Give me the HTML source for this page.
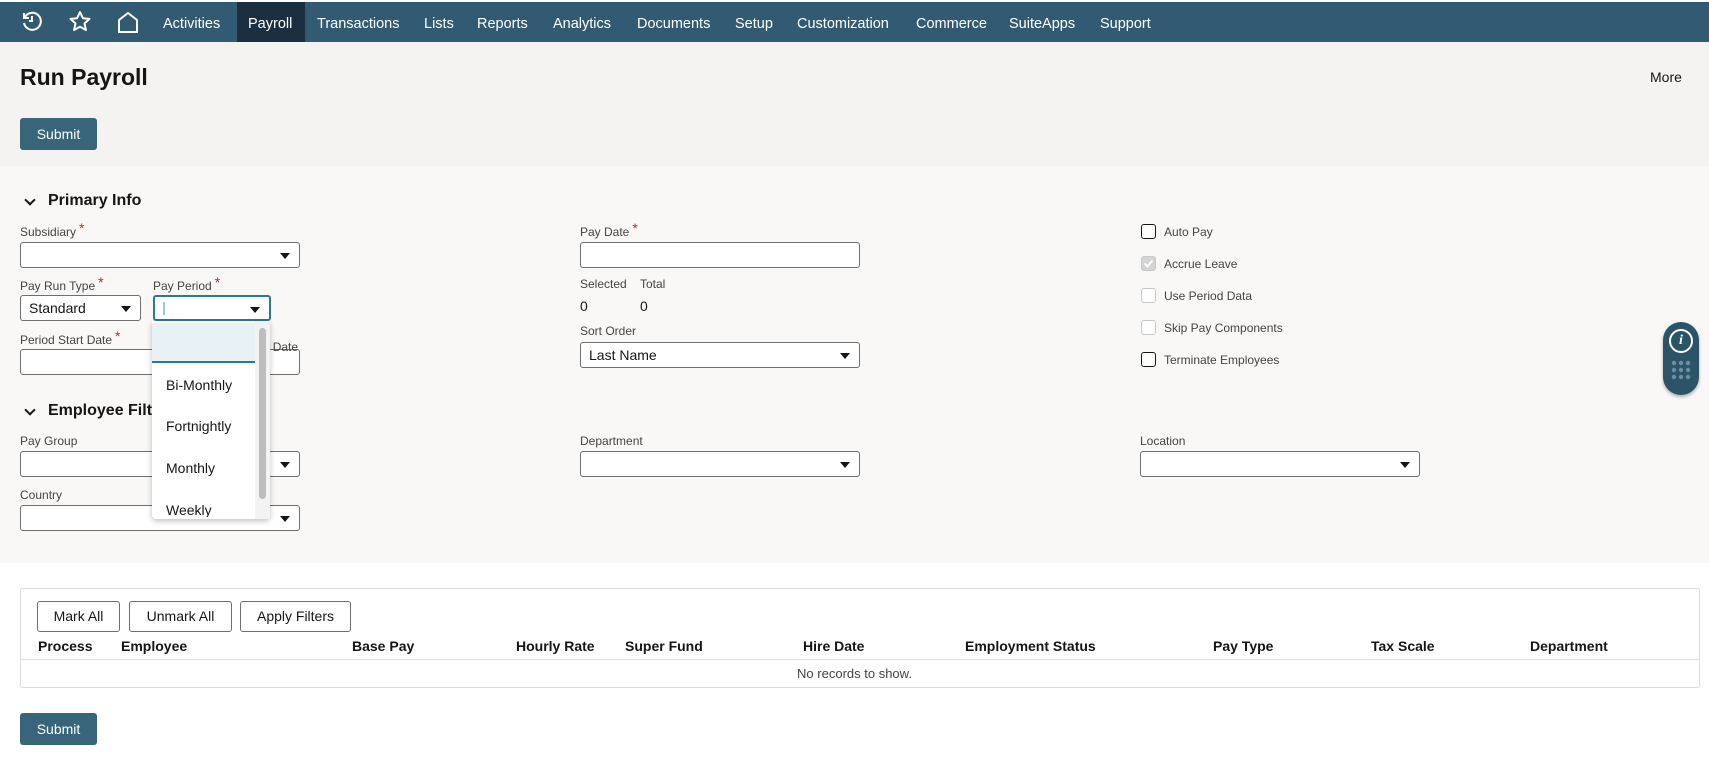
<!DOCTYPE html>
<html><head><meta charset="utf-8"><style>
*{box-sizing:border-box;margin:0;padding:0}
body{width:1709px;height:758px;overflow:hidden;font-family:"Liberation Sans",sans-serif;background:#fff;position:relative;color:#161513}
.a{position:absolute;white-space:nowrap}
.nav{left:0;top:2px;width:1709px;height:40px;background:#325b73}
.ni{top:4px;height:40px;line-height:40px;color:#fff;font-size:14.5px}
.lbl{font-size:12px;color:#444}
.req{color:#c0262d;font-size:14px;position:relative;top:-3px;margin-left:3px}
.sel{border:1px solid #6f6f6f;border-radius:3px;background:#fff;height:26px}
.sel:after{content:"";position:absolute;right:9px;top:10px;border-left:5px solid transparent;border-right:5px solid transparent;border-top:6px solid #161513}
.nosel:after{display:none}
.btn{background:#386579;color:#fff;border-radius:3px;font-size:14px;text-align:center;line-height:32px;height:32px;width:77px}
.wb{border:1px solid #6f6f6f;border-radius:3px;background:#fff;font-size:14px;height:31px;line-height:29px;text-align:center;color:#161513}
.cb{width:15px;height:15px;border:1.5px solid #161513;border-radius:3px;background:#fff}
.cb.d{border-color:#c8c8c8;border-width:1px}
.ct{font-size:12px;color:#444}
.th{top:638px;font-size:14px;font-weight:bold;color:#161513}
.sec{font-size:16px;font-weight:bold}
.chev{width:8px;height:8px;border-right:2px solid #161513;border-bottom:2px solid #161513;transform:rotate(45deg)}
.opt{font-size:14px;color:#161513;left:166px}
</style></head><body>
<div class="a nav"></div>
<svg class="a" style="left:20px;top:9px" width="24" height="24" viewBox="0 0 24 24" fill="none" stroke="#fff" stroke-width="2"><path d="M5 8A8.5 8.5 0 1 1 4 14"/><path d="M4 4v5h5"/><path d="M12 7v5h-3"/></svg>
<svg class="a" style="left:68px;top:10px" width="24" height="22" viewBox="0 0 24 22" fill="none" stroke="#fff" stroke-width="2" stroke-linejoin="round"><path d="M12 2l2.9 6.2 6.6.7-5 4.5 1.4 6.6L12 16.7 6.1 20l1.4-6.6-5-4.5 6.6-.7z"/></svg>
<svg class="a" style="left:117px;top:11px" width="22" height="22" viewBox="0 0 22 22" fill="none" stroke="#fff" stroke-width="2"><path d="M2 21V9L11 2l9 7v12z"/></svg>
<div class="a" style="left:237px;top:2px;width:68px;height:40px;background:#1c2f40"></div>
<div class="a ni" style="left:163px">Activities</div>
<div class="a ni" style="left:248px">Payroll</div>
<div class="a ni" style="left:317px">Transactions</div>
<div class="a ni" style="left:424px">Lists</div>
<div class="a ni" style="left:477px">Reports</div>
<div class="a ni" style="left:553px">Analytics</div>
<div class="a ni" style="left:637px">Documents</div>
<div class="a ni" style="left:735px">Setup</div>
<div class="a ni" style="left:797px">Customization</div>
<div class="a ni" style="left:916px">Commerce</div>
<div class="a ni" style="left:1009px">SuiteApps</div>
<div class="a ni" style="left:1100px">Support</div>

<div class="a" style="left:0;top:42px;width:1709px;height:124px;background:#f4f3f1"></div>
<div class="a" style="left:0;top:166px;width:1709px;height:397px;background:#f9f8f6"></div>
<div class="a" style="left:20px;top:64px;font-size:23px;font-weight:bold">Run Payroll</div>
<div class="a" style="left:1650px;top:69px;font-size:14px">More</div>
<div class="a btn" style="left:20px;top:118px">Submit</div>

<div class="a chev" style="left:26px;top:196px"></div>
<div class="a sec" style="left:48px;top:192px">Primary Info</div>
<div class="a lbl" style="left:20px;top:223px">Subsidiary<span class="req">*</span></div>
<div class="a sel" style="left:20px;top:242px;width:280px"></div>
<div class="a lbl" style="left:20px;top:277px">Pay Run Type<span class="req">*</span></div>
<div class="a sel" style="left:20px;top:295px;width:121px"><span style="position:absolute;left:8px;top:4px;font-size:14px">Standard</span></div>
<div class="a lbl" style="left:153px;top:277px">Pay Period<span class="req">*</span></div>
<div class="a sel" style="left:153px;top:295px;width:118px;border:2px solid #2a7a96"><span style="position:absolute;left:8px;top:5px;width:2px;height:13px;background:#9cc8e6"></span></div>
<div class="a lbl" style="left:20px;top:331px">Period Start Date<span class="req">*</span></div>
<div class="a sel nosel" style="left:20px;top:349px;width:280px"></div>
<div class="a lbl" style="left:210px;top:340px">Period End Date</div>

<div class="a lbl" style="left:580px;top:223px">Pay Date<span class="req">*</span></div>
<div class="a sel nosel" style="left:580px;top:242px;width:280px"></div>
<div class="a lbl" style="left:580px;top:277px">Selected</div>
<div class="a lbl" style="left:640px;top:277px">Total</div>
<div class="a" style="left:580px;top:298px;font-size:14px">0</div>
<div class="a" style="left:640px;top:298px;font-size:14px">0</div>
<div class="a lbl" style="left:580px;top:324px">Sort Order</div>
<div class="a sel" style="left:580px;top:342px;width:280px"><span style="position:absolute;left:8px;top:4px;font-size:14px">Last Name</span></div>

<div class="a cb" style="left:1141px;top:224px"></div><div class="a ct" style="left:1164px;top:225px">Auto Pay</div>
<div class="a cb d" style="left:1141px;top:256px;background:#d4d4d4"><svg width="13" height="13" viewBox="0 0 13 13" style="position:absolute;left:0;top:0"><path d="M2.5 6.5l3 3 5-6" stroke="#fff" stroke-width="1.8" fill="none"/></svg></div><div class="a ct" style="left:1164px;top:257px">Accrue Leave</div>
<div class="a cb d" style="left:1141px;top:288px"></div><div class="a ct" style="left:1164px;top:289px">Use Period Data</div>
<div class="a cb d" style="left:1141px;top:320px"></div><div class="a ct" style="left:1164px;top:321px">Skip Pay Components</div>
<div class="a cb" style="left:1141px;top:352px"></div><div class="a ct" style="left:1164px;top:353px">Terminate Employees</div>

<div class="a" style="left:1663px;top:322px;width:36px;height:73px;border-radius:18px;background:#2c5468;box-shadow:0 2px 3px rgba(0,0,0,.3)"></div>
<div class="a" style="left:1669px;top:329px;width:24px;height:24px;border:2px solid #fff;border-radius:50%;color:#fff;font:italic bold 14px 'Liberation Serif',serif;text-align:center;line-height:20px">i</div>
<svg class="a" style="left:1671px;top:360px" width="20" height="22"><g fill="#6f8ea0"><circle cx="3" cy="3" r="2.2"/><circle cx="10" cy="3" r="2.2"/><circle cx="17" cy="3" r="2.2"/><circle cx="3" cy="10" r="2.2"/><circle cx="10" cy="10" r="2.2"/><circle cx="17" cy="10" r="2.2"/><circle cx="3" cy="17" r="2.2"/><circle cx="10" cy="17" r="2.2"/><circle cx="17" cy="17" r="2.2"/></g></svg>

<div class="a chev" style="left:26px;top:406px"></div>
<div class="a sec" style="left:48px;top:402px">Employee Filters</div>
<div class="a lbl" style="left:20px;top:434px">Pay Group</div>
<div class="a sel" style="left:20px;top:451px;width:280px"></div>
<div class="a lbl" style="left:20px;top:488px">Country</div>
<div class="a sel" style="left:20px;top:505px;width:280px"></div>
<div class="a lbl" style="left:580px;top:434px">Department</div>
<div class="a sel" style="left:580px;top:451px;width:280px"></div>
<div class="a lbl" style="left:1140px;top:434px">Location</div>
<div class="a sel" style="left:1140px;top:451px;width:280px"></div>

<div class="a" style="left:152px;top:321px;width:118px;height:198px;background:#fff;border-radius:0 0 4px 4px;box-shadow:0 2px 6px rgba(0,0,0,.25)">
<div style="position:absolute;left:0;top:2px;width:103px;height:40px;background:#e8f1f3;border-bottom:2px solid #2a7a96"></div>
<div style="position:absolute;left:103px;top:0;width:15px;height:198px;background:#f3f3f3"></div>
<div style="position:absolute;left:107px;top:7px;width:7px;height:171px;background:#bdbdbd;border-radius:4px"></div>
</div>
<div class="a opt" style="top:377px">Bi-Monthly</div>
<div class="a opt" style="top:418px">Fortnightly</div>
<div class="a opt" style="top:460px">Monthly</div>
<div class="a opt" style="top:502px;height:15px;overflow:hidden">Weekly</div>

<div class="a" style="left:20px;top:588px;width:1680px;height:100px;border:1px solid #dcdcdc;border-radius:3px;background:#fff"></div>
<div class="a wb" style="left:37px;top:601px;width:83px">Mark All</div>
<div class="a wb" style="left:129px;top:601px;width:103px">Unmark All</div>
<div class="a wb" style="left:240px;top:601px;width:111px">Apply Filters</div>
<div class="a th" style="left:38px">Process</div>
<div class="a th" style="left:121px">Employee</div>
<div class="a th" style="left:352px">Base Pay</div>
<div class="a th" style="left:516px">Hourly Rate</div>
<div class="a th" style="left:625px">Super Fund</div>
<div class="a th" style="left:803px">Hire Date</div>
<div class="a th" style="left:965px">Employment Status</div>
<div class="a th" style="left:1213px">Pay Type</div>
<div class="a th" style="left:1371px">Tax Scale</div>
<div class="a th" style="left:1530px">Department</div>
<div class="a" style="left:21px;top:659px;width:1678px;height:1px;background:#e0e0e0"></div>
<div class="a" style="left:0;top:666px;width:1709px;text-align:center;font-size:13px;color:#444">No records to show.</div>
<div class="a btn" style="left:20px;top:713px">Submit</div>
</body></html>
